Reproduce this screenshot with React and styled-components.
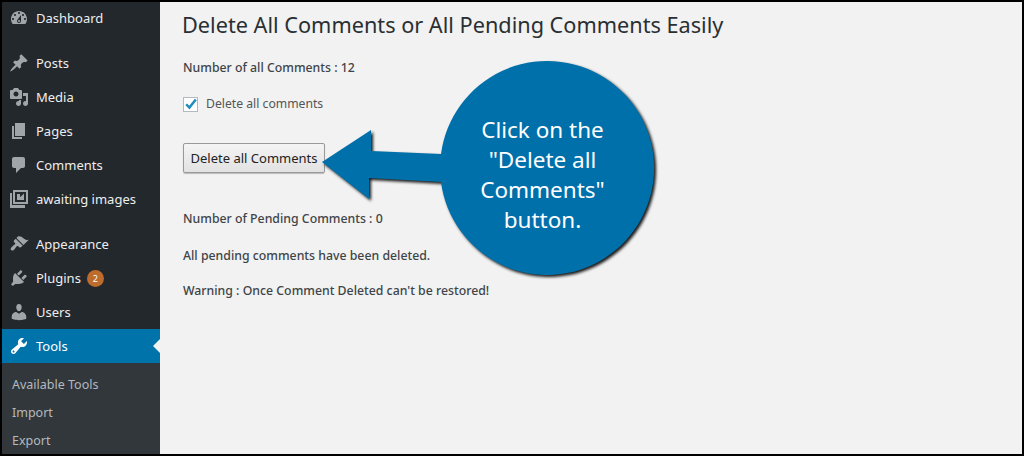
import styled, { createGlobalStyle } from "styled-components";

const FONT = `"Noto Sans", "Open Sans", sans-serif`;

const ICONS = {
  dashboard:
    "M3.76 16h12.48c1.1-1.37 1.76-3.11 1.76-5 0-4.42-3.58-8-8-8s-8 3.58-8 8c0 1.89.66 3.63 1.76 5zM10 4c.55 0 1 .45 1 1s-.45 1-1 1-1-.45-1-1 .45-1 1-1zM6 6c.55 0 1 .45 1 1s-.45 1-1 1-1-.45-1-1 .45-1 1-1zm8 0c.55 0 1 .45 1 1s-.45 1-1 1-1-.45-1-1 .45-1 1-1zm-5.37 5.55L12 7v6c0 1.1-.9 2-2 2s-2-.9-2-2c0-.57.24-1.08.63-1.45zM4 10c.55 0 1 .45 1 1s-.45 1-1 1-1-.45-1-1 .45-1 1-1zm12 0c.55 0 1 .45 1 1s-.45 1-1 1-1-.45-1-1 .45-1 1-1zm-5 3c0-.55-.45-1-1-1s-1 .45-1 1 .45 1 1 1 1-.45 1-1z",
  posts:
    "M10.44 3.02l1.82-1.82 6.36 6.35-1.83 1.82c-1.05-.68-2.48-.57-3.41.36l-.75.75c-.92.93-1.04 2.35-.35 3.41l-1.83 1.82-2.41-2.41-2.8 2.79c-.42.42-3.38 2.71-3.8 2.29s1.86-3.39 2.28-3.81l2.79-2.79L4.1 9.36l1.83-1.82c1.05.69 2.48.57 3.4-.36l.75-.75c.93-.92 1.05-2.35.36-3.41z",
  media:
    "M13 11V4c0-.55-.45-1-1-1h-1.67L9 1H5L3.67 3H2c-.55 0-1 .45-1 1v7c0 .55.45 1 1 1h10c.55 0 1-.45 1-1zM7 4.5c1.38 0 2.5 1.12 2.5 2.5S8.38 9.5 7 9.5 4.5 8.38 4.5 7 5.62 4.5 7 4.5zM14 6h5v10.5c0 1.38-1.12 2.5-2.5 2.5S14 17.88 14 16.5s1.12-2.5 2.5-2.5c.17 0 .34.02.5.05V9h-3V6zm-4 8.05V13h2v3.5c0 1.38-1.12 2.5-2.5 2.5S7 17.88 7 16.5 8.12 14 9.5 14c.17 0 .34.02.5.05z",
  pages: "M6 15V2h10v13H6zm-1 1h8v2H3V5h2v11z",
  comments:
    "M5 2h9c1.1 0 2 .9 2 2v7c0 1.1-.9 2-2 2h-2l-5 5v-5H5c-1.1 0-2-.9-2-2V4c0-1.1.9-2 2-2z",
  images:
    "M4 1h15v14H4V1zm2 2v10h11V3H6zM8 5h3v3l2-1.5L15 4.5V11H8V5zM1 4h2v12h13v3H1V4z",
  appearance:
    "M14.48 11.06L7.41 3.99l1.5-1.5c.5-.56 2.3-.47 3.51.32 1.21.8 1.43 1.28 2.91 2.1 1.18.64 2.45 1.26 4.45.85zm-.71.71L6.7 4.7 4.93 6.47c-.39.39-.39 1.02 0 1.41l1.06 1.06c.39.39.39 1.03 0 1.42-.6.6-1.43 1.11-2.21 1.69-.35.26-.7.53-1.01.84-1.43 1.43-1.4 2.52-.71 3.21.69.69 1.78.72 3.21-.71.31-.31.58-.66.84-1.01.58-.78 1.09-1.61 1.69-2.21.39-.39 1.03-.39 1.42 0l1.06 1.06c.39.39 1.02.39 1.41 0z",
  plugins:
    "M13.11 4.36L9.87 7.6 8 5.73l3.24-3.24c.35-.34 1.05-.2 1.56.32.52.51.66 1.21.31 1.55zm-8 1.77l.91-1.12 9.01 9.01-1.19.84c-.71.71-2.63 1.16-3.82 1.16H6.14L4.9 17.26c-.59.59-1.54.59-2.12 0-.59-.58-.59-1.53 0-2.12l1.24-1.24v-3.88c0-1.13.4-3.19 1.09-3.89zm7.26 3.97l3.24-3.24c.34-.35 1.04-.21 1.55.31.52.51.66 1.21.31 1.55l-3.24 3.25z",
  users:
    "M10 9.25c-2.27 0-2.73-3.44-2.73-3.44C7 4.02 7.82 2 9.97 2c2.16 0 2.98 2.02 2.71 3.81 0 0-.41 3.44-2.68 3.44zm0 2.57L12.72 10c2.39 0 4.52 2.33 4.52 4.53v2.49s-3.65 1.13-7.24 1.13c-3.65 0-7.24-1.13-7.24-1.13v-2.49c0-2.25 1.94-4.48 4.47-4.48z",
  tools:
    "M16.68 9.77c-1.34 1.34-3.3 1.67-4.95.99l-5.41 6.52c-.99.99-2.59.99-3.58 0s-.99-2.59 0-3.57l6.52-5.42c-.68-1.65-.35-3.61.99-4.95 1.28-1.28 3.12-1.62 4.72-1.06l-2.89 2.89 2.82 2.82 2.86-2.87c.53 1.58.18 3.39-1.08 4.65zM3.81 16.21c.4.39 1.04.39 1.43 0 .4-.4.4-1.04 0-1.43-.39-.4-1.03-.4-1.43 0-.39.39-.39 1.03 0 1.43z",
};

function MenuIcon({ name }) {
  return (
    <IconSvg viewBox="0 0 20 20" aria-hidden="true">
      <path d={ICONS[name]} />
    </IconSvg>
  );
}

export default function App() {
  return (
    <>
      <GlobalStyle />
      <Frame>
        <Sidebar>
          <MenuGroup>
            <MenuItem $first>
              <MenuIcon name="dashboard" />
              Dashboard
            </MenuItem>
          </MenuGroup>
          <MenuGroup>
            <MenuItem>
              <MenuIcon name="posts" />
              Posts
            </MenuItem>
            <MenuItem>
              <MenuIcon name="media" />
              Media
            </MenuItem>
            <MenuItem>
              <MenuIcon name="pages" />
              Pages
            </MenuItem>
            <MenuItem>
              <MenuIcon name="comments" />
              Comments
            </MenuItem>
            <MenuItem>
              <MenuIcon name="images" />
              awaiting images
            </MenuItem>
          </MenuGroup>
          <MenuGroup>
            <MenuItem>
              <MenuIcon name="appearance" />
              Appearance
            </MenuItem>
            <MenuItem>
              <MenuIcon name="plugins" />
              Plugins
              <Badge>2</Badge>
            </MenuItem>
            <MenuItem>
              <MenuIcon name="users" />
              Users
            </MenuItem>
            <MenuItem $active>
              <MenuIcon name="tools" />
              Tools
              <ActiveNotch />
            </MenuItem>
            <SubMenu>
              <SubItem>Available Tools</SubItem>
              <SubItem>Import</SubItem>
              <SubItem>Export</SubItem>
            </SubMenu>
          </MenuGroup>
        </Sidebar>
        <Main>
          <Title>Delete All Comments or All Pending Comments Easily</Title>
          <Line $top={17}>Number of all Comments : 12</Line>
          <CheckRow>
            <CheckBox>
              <svg width="12" height="12" viewBox="0 0 12 12" aria-hidden="true">
                <path d="M1.2 6.2 L4.4 9.6 L10.8 1.6" fill="none" stroke="#1e8cbe" strokeWidth="2.4" />
              </svg>
            </CheckBox>
            Delete all comments
          </CheckRow>
          <DeleteButton>Delete all Comments</DeleteButton>
          <Line $top={36}>Number of Pending Comments : 0</Line>
          <Line $top={17}>All pending comments have been deleted.</Line>
          <Line $top={15}>Warning : Once Comment Deleted can't be restored!</Line>
          <Callout>
            <CalloutShape viewBox="0 0 345 230" aria-hidden="true">
              <path
                d="M2 102 L51 70 L51 91 L121 94 A107 107 0 1 1 121 122 L49 118 L49 139 Z"
                fill="#0070ab"
              />
            </CalloutShape>
            <CalloutText>
              Click on the
              <br />
              "Delete all
              <br />
              Comments"
              <br />
              button.
            </CalloutText>
          </Callout>
        </Main>
      </Frame>
    </>
  );
}

const GlobalStyle = createGlobalStyle`
  html, body {
    margin: 0;
    padding: 0;
    background: #000;
  }
  body {
    font-family: ${FONT};
  }
`;

const Frame = styled.div`
  box-sizing: border-box;
  width: 1024px;
  height: 456px;
  border: 2px solid #000;
  display: flex;
  overflow: hidden;
  background: #f1f2f1;
`;

const Sidebar = styled.nav`
  width: 158px;
  flex: none;
  background: #23282d;
  display: flex;
  flex-direction: column;
  gap: 11px;
`;

const MenuGroup = styled.div`
  display: flex;
  flex-direction: column;
`;

const MenuItem = styled.div`
  position: relative;
  height: ${(p) => (p.$first ? 32 : 34)}px;
  margin-bottom: ${(p) => (p.$first ? 1 : 0)}px;
  display: flex;
  align-items: center;
  gap: 7px;
  padding-left: 7px;
  font-size: 13px;
  color: ${(p) => (p.$active ? "#fff" : "#eee")};
  background: ${(p) => (p.$active ? "#0073aa" : "transparent")};
  fill: ${(p) => (p.$active ? "#fff" : "#a0a5aa")};
`;

const IconSvg = styled.svg`
  width: 20px;
  height: 20px;
  flex: none;
`;

const Badge = styled.span`
  width: 17px;
  height: 17px;
  margin-left: -1px;
  border-radius: 50%;
  background: #bd6c2c;
  color: #fff;
  font-size: 9px;
  display: flex;
  align-items: center;
  justify-content: center;
`;

const ActiveNotch = styled.span`
  position: absolute;
  right: 0;
  top: 10px;
  border: 7px solid transparent;
  border-left-width: 0;
  border-right-color: #f1f2f1;
`;

const SubMenu = styled.div`
  background: #32373c;
  flex: 1;
  padding-top: 8px;
`;

const SubItem = styled.div`
  height: 28px;
  line-height: 28px;
  padding-left: 10px;
  font-size: 12.5px;
  color: #b4b9be;
`;

const Main = styled.main`
  position: relative;
  flex: 1;
  padding-left: 23px;
  color: #3f4448;
`;

const Title = styled.h1`
  margin: 7px 0 0 -1px;
  font-size: 21.7px;
  line-height: 32px;
  font-weight: 400;
  color: #2a2f33;
`;

const Line = styled.p`
  margin: ${(p) => p.$top}px 0 0;
  font-size: 12.3px;
  line-height: 20px;
  font-weight: 500;
`;

const CheckRow = styled.label`
  margin-top: 16px;
  display: flex;
  align-items: center;
  gap: 8px;
  font-size: 12.2px;
  line-height: 20px;
  color: #555;
`;

const CheckBox = styled.span`
  box-sizing: border-box;
  width: 15px;
  height: 15px;
  background: #fff;
  border: 1px solid #b4b9be;
  display: flex;
  align-items: center;
  justify-content: center;
`;

const DeleteButton = styled.button`
  display: block;
  box-sizing: border-box;
  margin-top: 29px;
  width: 142px;
  height: 30px;
  padding: 0;
  border: 1px solid #999;
  border-radius: 2px;
  background: linear-gradient(#f4f4f4, #e2e2e2);
  box-shadow: 0 1px 1px #bbb;
  font-family: ${FONT};
  font-size: 13px;
  color: #222;
`;

const Callout = styled.div`
  position: absolute;
  left: 160px;
  top: 58px;
  width: 345px;
  height: 230px;
`;

const CalloutShape = styled.svg`
  position: absolute;
  inset: 0;
  width: 345px;
  height: 230px;
  filter: drop-shadow(2px 2px 1.5px rgba(0, 0, 0, 0.9));
`;

const CalloutText = styled.div`
  position: absolute;
  left: 121px;
  top: 55px;
  width: 203px;
  text-align: center;
  color: #fff;
  font-size: 22.5px;
  line-height: 30px;
`;
